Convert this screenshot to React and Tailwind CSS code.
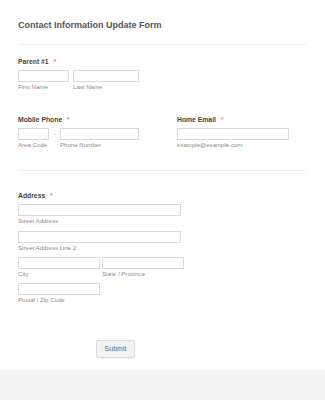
export default function App() {
  const font = { fontFamily: '"Liberation Sans", Arial, sans-serif' };
  const input = 'h-[12px] border border-[#d9d9d9] bg-white';
  const sub = 'mt-[1px] text-[6.1px] leading-[8px] text-[#8c8c8c] whitespace-nowrap';
  const label = 'text-[6.8px] leading-[9px] font-bold text-[#444]';

  return (
    <div className="w-[325px] h-[400px] bg-white flex flex-col" style={font}>
      <div className="px-[18px]">
        {/* Title */}
        <h1 className="mt-[19px] text-[9px] leading-[12px] font-bold text-[#555]">
          Contact Information Update Form
        </h1>
        <div className="mt-[13px] h-px bg-[#ececec]" />

        {/* Parent */}
        <p className={`mt-[12px] ${label}`}>
          Parent #1 <span className="ml-[3px] text-[#e05050] font-normal">*</span>
        </p>
        <div className="mt-[4px] flex gap-[4px]">
          <div className="w-[51px]">
            <div className={input} />
            <p className={sub}>First Name</p>
          </div>
          <div className="w-[66px]">
            <div className={input} />
            <p className={sub}>Last Name</p>
          </div>
        </div>

        {/* Phone + Email */}
        <div className="mt-[24px] flex">
          <div className="w-[159px]">
            <p className={label}>
              Mobile Phone <span className="ml-[3px] text-[#e05050] font-normal">*</span>
            </p>
            <div className="mt-[4px] flex">
              <div className="w-[31px]">
                <div className={input} />
                <p className={sub}>Area Code</p>
              </div>
              <span className="w-[11px] text-center text-[7px] leading-[12px] text-[#999]">-</span>
              <div className="w-[79px]">
                <div className={input} />
                <p className={sub}>Phone Number</p>
              </div>
            </div>
          </div>
          <div className="w-[112px]">
            <p className={label}>
              Home Email <span className="ml-[3px] text-[#e05050] font-normal">*</span>
            </p>
            <div className="mt-[4px]">
              <div className={input} />
              <p className={sub}>example@example.com</p>
            </div>
          </div>
        </div>

        <div className="mt-[21px] h-px bg-[#ececec]" />

        {/* Address */}
        <p className={`mt-[20px] ${label}`}>
          Address <span className="ml-[3px] text-[#e05050] font-normal">*</span>
        </p>
        <div className="mt-[4px] w-[163px]">
          <div className={input} />
          <p className={sub}>Street Address</p>
        </div>
        <div className="mt-[6px] w-[163px]">
          <div className={input} />
          <p className={sub}>Street Address Line 2</p>
        </div>
        <div className="mt-[5px] flex gap-[2px]">
          <div className="w-[82px]">
            <div className={input} />
            <p className={sub}>City</p>
          </div>
          <div className="w-[82px]">
            <div className={input} />
            <p className={sub}>State / Province</p>
          </div>
        </div>
        <div className="mt-[5px] w-[82px]">
          <div className={input} />
          <p className={sub}>Postal / Zip Code</p>
        </div>

        {/* Submit */}
        <div className="mt-[30px] pl-[78px]">
          <button className="w-[39px] h-[18px] rounded-[2px] border border-[#dcdcdc] bg-[#f2f2f2] text-[7px] text-[#666] shadow-[0_1px_1px_rgba(0,0,0,0.05)]">
            Submit
          </button>
        </div>
      </div>

      <div className="mt-auto h-[30px] bg-[#f3f3f3]" />
    </div>
  );
}
